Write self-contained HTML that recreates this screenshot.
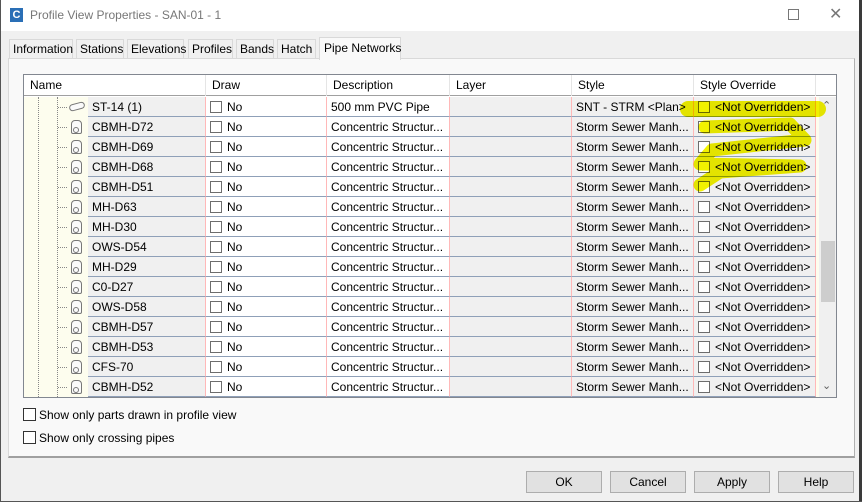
<!DOCTYPE html>
<html><head><meta charset="utf-8"><style>
*{margin:0;padding:0;box-sizing:border-box}
body{width:862px;height:502px;overflow:hidden;background:#f0f0f0;font-family:"Liberation Sans",sans-serif;font-size:12px;color:#000;position:relative}
.a{position:absolute}
.title{left:0;top:0;width:862px;height:31px;background:#fff}
.tab{top:39px;height:20px;border:1px solid #d9d9d9;border-bottom:none;background:#f0f0f0;padding:2px 3px;font-size:12px;white-space:nowrap}
.panel{left:8px;top:58px;width:847px;height:400px;background:#f9f9f9;border:1px solid #d9d9d9;border-right-color:#b0b0b0;border-bottom:2px solid #a0a0a0}
.grid{left:23px;top:74px;width:814px;height:324px;border:1px solid #828790;background:#fff;overflow:hidden}
.hd{top:0;height:21px;background:#fff;border-bottom:1px solid #a0a0a0}
.hc{position:absolute;top:0;height:21px;border-right:1px solid #e5e5e5;padding:3px 6px}
.c{position:absolute;top:0;height:20px;border-bottom:1px solid #8fa0b8;padding:3px 4px 0;white-space:nowrap;border-right:1px solid #ffb8b8}
.g{background:#f0f0f0}
.w{background:#fff}
.cb{display:inline-block;width:12px;height:12px;border:1px solid #6d6d6d;background:#fff;vertical-align:-2px;margin-right:5px}
.tree{position:absolute;left:0;top:22px;width:64px;height:300px;background:#fdfdee}
.btn{top:471px;width:76px;height:22px;background:#e1e1e1;border:1px solid #adadad;text-align:center;line-height:20px}
.r{position:absolute;left:0;width:795px;height:20px}
.n{left:64px;width:118px;background:#f0f0f0}
.dt{position:absolute;left:34px;top:10px;width:9px;border-top:1px dotted #888}
.ic{position:absolute;left:47px;top:3px;width:11px;height:14px;border:1px solid #777;border-radius:4px 4px 2px 2px;background:#fafafa}
.ic:after{content:"";position:absolute;left:1px;top:6px;width:4px;height:4px;border:1px solid #777;border-radius:50%}
.pp{position:absolute;left:45px;top:6px;width:16px;height:7px;border:1px solid #777;border-radius:4px;transform:rotate(-15deg);background:#fafafa}
</style></head><body>
<div class="a title">
 <div class="a" style="left:10px;top:8px;width:13px;height:14px;background:#2a6fb6;color:#fff;font-weight:bold;font-size:11px;text-align:center;line-height:14px">C</div>
 <div class="a" style="left:30px;top:8px;color:#777;font-size:12px">Profile View Properties - SAN-01 - 1</div>
 <div class="a" style="left:788px;top:9px;width:11px;height:11px;border:1px solid #777"></div>
 <div class="a" style="left:829px;top:4px;color:#777;font-size:16px">✕</div>
</div>
<div class="a" style="right:0;top:0;width:3px;height:502px;background:#3a3a3a"></div>
<div class="a" style="left:0;top:0;width:1px;height:502px;background:#555"></div>
<div class="a" style="left:0;top:501px;width:862px;height:1px;background:#555"></div>

<div class="a tab" style="left:9px;width:64px">Information</div>
<div class="a tab" style="left:76px;width:48px">Stations</div>
<div class="a tab" style="left:127px;width:57px">Elevations</div>
<div class="a tab" style="left:188px;width:45px">Profiles</div>
<div class="a tab" style="left:236px;width:38px">Bands</div>
<div class="a tab" style="left:277px;width:39px">Hatch</div>
<div class="a panel"></div>
<div class="a tab" style="left:319px;top:37px;width:82px;height:23px;background:#f9f9f9;z-index:2;padding-left:4px;padding-top:3px">Pipe Networks</div>

<div class="a grid">
 <div class="a hd" style="left:0;width:812px">
  <div class="hc" style="left:0;width:182px">Name</div>
  <div class="hc" style="left:182px;width:121px">Draw</div>
  <div class="hc" style="left:303px;width:123px">Description</div>
  <div class="hc" style="left:426px;width:122px">Layer</div>
  <div class="hc" style="left:548px;width:122px">Style</div>
  <div class="hc" style="left:670px;width:122px">Style Override</div>
 </div>
 <div class="tree"></div>
 <div class="a" style="left:14px;top:22px;height:300px;border-left:1px dotted #888"></div>
 <div class="a" style="left:33px;top:22px;height:300px;border-left:1px dotted #888"></div>
 <div class="a" style="left:792px;top:22px;width:3px;height:300px;background:#fdfdee"></div>
 <div class="a" style="left:795px;top:22px;width:17px;height:300px;background:#f0f0f0"></div>
 <div class="a" style="left:797px;top:166px;width:14px;height:61px;background:#cdcdcd"></div>
 <div class="a" style="left:798px;top:24px;color:#606060;font-size:11px">⌃</div>
 <div class="a" style="left:798px;top:304px;color:#606060;font-size:11px">⌄</div>
</div>

<div class="a" style="left:39px;top:408px">Show only parts drawn in profile view</div>
<div class="a" style="left:23px;top:408px;width:13px;height:13px;border:1px solid #333;background:#fff"></div>
<div class="a" style="left:23px;top:431px;width:13px;height:13px;border:1px solid #333;background:#fff"></div>
<div class="a" style="left:39px;top:431px">Show only crossing pipes</div>

<div class="a btn" style="left:526px">OK</div>
<div class="a btn" style="left:610px">Cancel</div>
<div class="a btn" style="left:694px">Apply</div>
<div class="a btn" style="left:778px">Help</div>

<div class="a" style="left:24px;top:97px;width:795px;height:300px;overflow:hidden">
<div class="r" style="top:0"><div class="dt"></div><div class="pp"></div><div class="c n">ST-14 (1)</div><div class="c w" style="left:182px;width:121px"><span class="cb"></span>No</div><div class="c w" style="left:303px;width:123px">500 mm PVC Pipe</div><div class="c g" style="left:426px;width:122px"></div><div class="c g" style="left:548px;width:122px">SNT - STRM &lt;Plan&gt;</div><div class="c g" style="left:670px;width:122px"><span class="cb"></span>&lt;Not Overridden&gt;</div></div>
<div class="r" style="top:20px"><div class="dt"></div><div class="ic"></div><div class="c n">CBMH-D72</div><div class="c w" style="left:182px;width:121px"><span class="cb"></span>No</div><div class="c w" style="left:303px;width:123px">Concentric Structur...</div><div class="c g" style="left:426px;width:122px"></div><div class="c g" style="left:548px;width:122px">Storm Sewer Manh...</div><div class="c g" style="left:670px;width:122px"><span class="cb"></span>&lt;Not Overridden&gt;</div></div>
<div class="r" style="top:40px"><div class="dt"></div><div class="ic"></div><div class="c n">CBMH-D69</div><div class="c w" style="left:182px;width:121px"><span class="cb"></span>No</div><div class="c w" style="left:303px;width:123px">Concentric Structur...</div><div class="c g" style="left:426px;width:122px"></div><div class="c g" style="left:548px;width:122px">Storm Sewer Manh...</div><div class="c g" style="left:670px;width:122px"><span class="cb"></span>&lt;Not Overridden&gt;</div></div>
<div class="r" style="top:60px"><div class="dt"></div><div class="ic"></div><div class="c n">CBMH-D68</div><div class="c w" style="left:182px;width:121px"><span class="cb"></span>No</div><div class="c w" style="left:303px;width:123px">Concentric Structur...</div><div class="c g" style="left:426px;width:122px"></div><div class="c g" style="left:548px;width:122px">Storm Sewer Manh...</div><div class="c g" style="left:670px;width:122px"><span class="cb"></span>&lt;Not Overridden&gt;</div></div>
<div class="r" style="top:80px"><div class="dt"></div><div class="ic"></div><div class="c n">CBMH-D51</div><div class="c w" style="left:182px;width:121px"><span class="cb"></span>No</div><div class="c w" style="left:303px;width:123px">Concentric Structur...</div><div class="c g" style="left:426px;width:122px"></div><div class="c g" style="left:548px;width:122px">Storm Sewer Manh...</div><div class="c g" style="left:670px;width:122px"><span class="cb"></span>&lt;Not Overridden&gt;</div></div>
<div class="r" style="top:100px"><div class="dt"></div><div class="ic"></div><div class="c n">MH-D63</div><div class="c w" style="left:182px;width:121px"><span class="cb"></span>No</div><div class="c w" style="left:303px;width:123px">Concentric Structur...</div><div class="c g" style="left:426px;width:122px"></div><div class="c g" style="left:548px;width:122px">Storm Sewer Manh...</div><div class="c g" style="left:670px;width:122px"><span class="cb"></span>&lt;Not Overridden&gt;</div></div>
<div class="r" style="top:120px"><div class="dt"></div><div class="ic"></div><div class="c n">MH-D30</div><div class="c w" style="left:182px;width:121px"><span class="cb"></span>No</div><div class="c w" style="left:303px;width:123px">Concentric Structur...</div><div class="c g" style="left:426px;width:122px"></div><div class="c g" style="left:548px;width:122px">Storm Sewer Manh...</div><div class="c g" style="left:670px;width:122px"><span class="cb"></span>&lt;Not Overridden&gt;</div></div>
<div class="r" style="top:140px"><div class="dt"></div><div class="ic"></div><div class="c n">OWS-D54</div><div class="c w" style="left:182px;width:121px"><span class="cb"></span>No</div><div class="c w" style="left:303px;width:123px">Concentric Structur...</div><div class="c g" style="left:426px;width:122px"></div><div class="c g" style="left:548px;width:122px">Storm Sewer Manh...</div><div class="c g" style="left:670px;width:122px"><span class="cb"></span>&lt;Not Overridden&gt;</div></div>
<div class="r" style="top:160px"><div class="dt"></div><div class="ic"></div><div class="c n">MH-D29</div><div class="c w" style="left:182px;width:121px"><span class="cb"></span>No</div><div class="c w" style="left:303px;width:123px">Concentric Structur...</div><div class="c g" style="left:426px;width:122px"></div><div class="c g" style="left:548px;width:122px">Storm Sewer Manh...</div><div class="c g" style="left:670px;width:122px"><span class="cb"></span>&lt;Not Overridden&gt;</div></div>
<div class="r" style="top:180px"><div class="dt"></div><div class="ic"></div><div class="c n">C0-D27</div><div class="c w" style="left:182px;width:121px"><span class="cb"></span>No</div><div class="c w" style="left:303px;width:123px">Concentric Structur...</div><div class="c g" style="left:426px;width:122px"></div><div class="c g" style="left:548px;width:122px">Storm Sewer Manh...</div><div class="c g" style="left:670px;width:122px"><span class="cb"></span>&lt;Not Overridden&gt;</div></div>
<div class="r" style="top:200px"><div class="dt"></div><div class="ic"></div><div class="c n">OWS-D58</div><div class="c w" style="left:182px;width:121px"><span class="cb"></span>No</div><div class="c w" style="left:303px;width:123px">Concentric Structur...</div><div class="c g" style="left:426px;width:122px"></div><div class="c g" style="left:548px;width:122px">Storm Sewer Manh...</div><div class="c g" style="left:670px;width:122px"><span class="cb"></span>&lt;Not Overridden&gt;</div></div>
<div class="r" style="top:220px"><div class="dt"></div><div class="ic"></div><div class="c n">CBMH-D57</div><div class="c w" style="left:182px;width:121px"><span class="cb"></span>No</div><div class="c w" style="left:303px;width:123px">Concentric Structur...</div><div class="c g" style="left:426px;width:122px"></div><div class="c g" style="left:548px;width:122px">Storm Sewer Manh...</div><div class="c g" style="left:670px;width:122px"><span class="cb"></span>&lt;Not Overridden&gt;</div></div>
<div class="r" style="top:240px"><div class="dt"></div><div class="ic"></div><div class="c n">CBMH-D53</div><div class="c w" style="left:182px;width:121px"><span class="cb"></span>No</div><div class="c w" style="left:303px;width:123px">Concentric Structur...</div><div class="c g" style="left:426px;width:122px"></div><div class="c g" style="left:548px;width:122px">Storm Sewer Manh...</div><div class="c g" style="left:670px;width:122px"><span class="cb"></span>&lt;Not Overridden&gt;</div></div>
<div class="r" style="top:260px"><div class="dt"></div><div class="ic"></div><div class="c n">CFS-70</div><div class="c w" style="left:182px;width:121px"><span class="cb"></span>No</div><div class="c w" style="left:303px;width:123px">Concentric Structur...</div><div class="c g" style="left:426px;width:122px"></div><div class="c g" style="left:548px;width:122px">Storm Sewer Manh...</div><div class="c g" style="left:670px;width:122px"><span class="cb"></span>&lt;Not Overridden&gt;</div></div>
<div class="r" style="top:280px"><div class="dt"></div><div class="ic"></div><div class="c n">CBMH-D52</div><div class="c w" style="left:182px;width:121px"><span class="cb"></span>No</div><div class="c w" style="left:303px;width:123px">Concentric Structur...</div><div class="c g" style="left:426px;width:122px"></div><div class="c g" style="left:548px;width:122px">Storm Sewer Manh...</div><div class="c g" style="left:670px;width:122px"><span class="cb"></span>&lt;Not Overridden&gt;</div></div>
</div>

<svg class="a" style="left:0;top:0;mix-blend-mode:multiply" width="862" height="502">
<g fill="none" stroke="#f2f200" stroke-linecap="round" stroke-linejoin="round">
<path d="M688 109 L818 109" stroke-width="16"/>
<path d="M705 127 L790 124 L805 140 L712 150 L700 164 L800 166 L720 172 L700 185" stroke-width="13"/>
</g>
</svg>
</body></html>
